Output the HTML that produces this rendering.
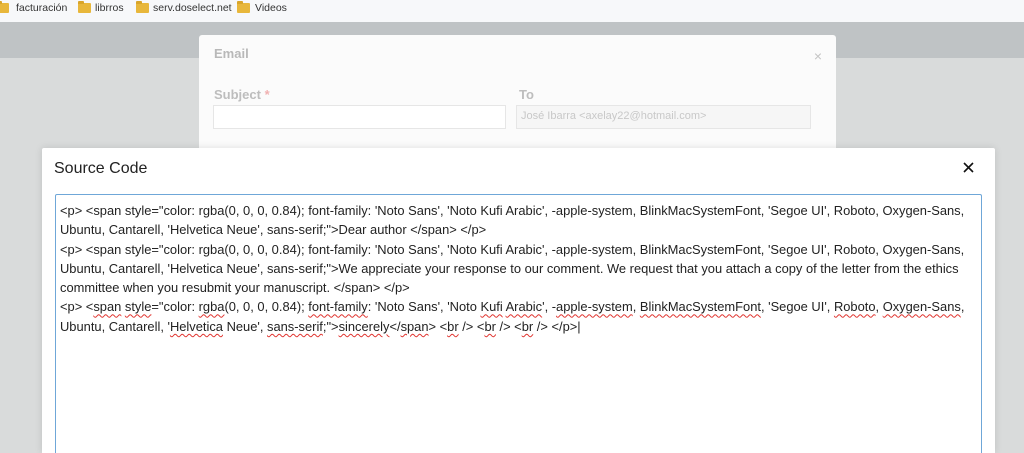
<!DOCTYPE html>
<html><head><meta charset="utf-8"><style>
*{margin:0;padding:0;box-sizing:border-box}
html,body{width:1024px;height:453px;overflow:hidden}
body{position:relative;background:#d9dbdb;font-family:"Liberation Sans",sans-serif}
.bar{position:absolute;left:0;top:0;width:1024px;height:22px;background:#f7f8fa;font-size:10.5px;color:#333}
.bar span{position:absolute;top:2px}
.fold{position:absolute;top:3px;width:13px;height:10px;background:#e8b73b;border-radius:1px}
.fold:before{content:"";position:absolute;left:0;top:-2px;width:6px;height:3px;background:#d9a52a;border-radius:1px 1px 0 0}
.top{position:absolute;left:0;top:22px;width:1024px;height:36px;background:#bfc3c5}
.email{position:absolute;left:199px;top:35px;width:637px;height:113px;background:#fbfbfb;border-radius:3px 3px 0 0}
.email .t{position:absolute;left:15px;top:11px;font-size:13px;color:#b8b8b8;font-weight:bold}
.email .x{position:absolute;right:14px;top:13px;color:#c4c4c4;font-size:14px}
.lab{position:absolute;top:52px;font-size:13px;color:#bdbdbd;font-weight:bold}
.inp{position:absolute;top:70px;height:24px;border:1px solid #e6e6e6;background:#fff;font-size:11px;color:#c8c8c8;padding:4px 4px}
.dlg{position:absolute;left:42px;top:148px;width:953px;height:305px;background:#fff;border-radius:2px 2px 0 0;box-shadow:0 0 8px rgba(0,0,0,.12)}
.dlg .h{position:absolute;left:12px;top:12px;font-size:16px;color:#222}
.dlg .cl{position:absolute;right:21px;top:14px}
.ta{position:absolute;left:13px;top:46px;width:927px;height:259px;border:1px solid #6fa7d8;border-bottom:none;border-radius:2px 2px 0 0}
.code{position:absolute;left:18px;top:53px;font-size:12.9px;line-height:19.3px;color:#222;white-space:nowrap}
.sq{text-decoration:underline wavy #e0342f;text-decoration-thickness:1px;text-underline-offset:2px}
</style></head><body>
<div class="bar">
<div class="fold" style="left:-4px"></div><span style="left:16px">facturación</span>
<div class="fold" style="left:78px"></div><span style="left:95px">librros</span>
<div class="fold" style="left:136px"></div><span style="left:153px">serv.doselect.net</span>
<div class="fold" style="left:237px"></div><span style="left:255px">Videos</span>
</div>
<div class="top"></div>
<div class="email">
<div class="t">Email</div><div class="x">×</div>
<div class="lab" style="left:15px">Subject <span style="color:#f0b0b0">*</span></div>
<div class="lab" style="left:320px">To</div>
<div class="inp" style="left:14px;width:293px"></div>
<div class="inp" style="left:317px;width:295px;background:#f6f6f6">José Ibarra &lt;axelay22@hotmail.com&gt;</div>
</div>
<div class="dlg">
<div class="h">Source Code</div>
<svg class="cl" width="11" height="11" viewBox="0 0 11 11"><path d="M1 1L10 10M10 1L1 10" stroke="#111" stroke-width="1.6"/></svg>
<div class="ta"></div>
<div class="code">
&lt;p&gt; &lt;span style="color: rgba(0, 0, 0, 0.84); font-family: 'Noto Sans', 'Noto Kufi Arabic', -apple-system, BlinkMacSystemFont, 'Segoe UI', Roboto, Oxygen-Sans,<br>
Ubuntu, Cantarell, 'Helvetica Neue', sans-serif;"&gt;Dear author &lt;/span&gt; &lt;/p&gt;<br>
&lt;p&gt; &lt;span style="color: rgba(0, 0, 0, 0.84); font-family: 'Noto Sans', 'Noto Kufi Arabic', -apple-system, BlinkMacSystemFont, 'Segoe UI', Roboto, Oxygen-Sans,<br>
Ubuntu, Cantarell, 'Helvetica Neue', sans-serif;"&gt;We appreciate your response to our comment. We request that you attach a copy of the letter from the ethics<br>
committee when you resubmit your manuscript. &lt;/span&gt; &lt;/p&gt;<br>
&lt;p&gt; &lt;<span class="sq">span</span> <span class="sq">style</span>="color: <span class="sq">rgba</span>(0, 0, 0, 0.84); <span class="sq">font-family</span>: 'Noto Sans', 'Noto <span class="sq">Kufi</span> <span class="sq">Arabic</span>', -<span class="sq">apple-system</span>, <span class="sq">BlinkMacSystemFont</span>, 'Segoe UI', <span class="sq">Roboto</span>, <span class="sq">Oxygen-Sans</span>,<br>
Ubuntu, Cantarell, '<span class="sq">Helvetica</span> Neue', <span class="sq">sans-serif</span>;"&gt;<span class="sq">sincerely</span>&lt;/<span class="sq">span</span>&gt; &lt;<span class="sq">br</span> /&gt; &lt;<span class="sq">br</span> /&gt; &lt;<span class="sq">br</span> /&gt; &lt;/p&gt;|
</div>
</div>
</body></html>
